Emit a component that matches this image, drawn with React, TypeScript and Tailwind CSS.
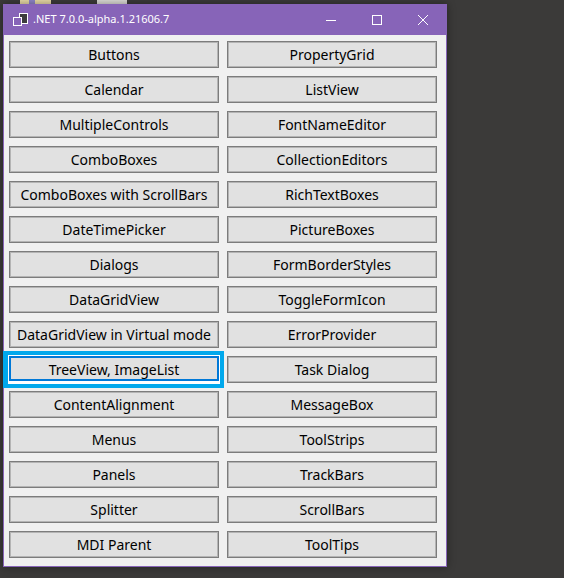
const LEFT = [
  "Buttons",
  "Calendar",
  "MultipleControls",
  "ComboBoxes",
  "ComboBoxes with ScrollBars",
  "DateTimePicker",
  "Dialogs",
  "DataGridView",
  "DataGridView in Virtual mode",
  "TreeView, ImageList",
  "ContentAlignment",
  "Menus",
  "Panels",
  "Splitter",
  "MDI Parent",
];

const RIGHT = [
  "PropertyGrid",
  "ListView",
  "FontNameEditor",
  "CollectionEditors",
  "RichTextBoxes",
  "PictureBoxes",
  "FormBorderStyles",
  "ToggleFormIcon",
  "ErrorProvider",
  "Task Dialog",
  "MessageBox",
  "ToolStrips",
  "TrackBars",
  "ScrollBars",
  "ToolTips",
];

function DemoButton({ label }: { label: string }) {
  if (label === "TreeView, ImageList") {
    return (
      <div className="relative h-[27px] w-[210px]">
        {/* focus ring sits over the window edge */}
        <div className="absolute -top-[5px] -right-[5px] -bottom-[5px] -left-[6px] border-[4px] border-l-[5px] border-[#00a8ec] bg-white" />
        <button
          type="button"
          className="relative block h-[25px] w-full border-2 border-[#0078d7] bg-[#e1e1e1] pt-[2px] text-center text-[14px] leading-[19px] text-black"
        >
          {label}
        </button>
      </div>
    );
  }
  return (
    <button
      type="button"
      className="block h-[27px] w-[210px] border border-[#7c7c7c] bg-[#e1e1e1] text-center text-[14px] leading-[25px] text-black shadow-[inset_0_0_0_1px_#b4b4b4]"
    >
      {label}
    </button>
  );
}

export default function App() {
  const rows = LEFT.map((label, i) => [label, RIGHT[i]]);

  return (
    <div
      className="relative h-[578px] w-[564px] overflow-hidden bg-[#3b3a39] pt-[4px] pl-[3px]"
      style={{ fontFamily: '"Noto Sans", "Open Sans", sans-serif' }}
    >
      {/* desktop icons peeking out above the window */}
      <div className="absolute top-0 left-[20px] h-[4px] w-[31px] bg-[#e8d9a6]" />
      <div className="absolute top-0 left-[29px] h-[4px] w-[6px] bg-[#8f86c8]" />
      <div className="absolute top-0 left-[97px] h-[4px] w-[30px] bg-[#dcdcd6]" />

      <div className="relative h-[563px] w-[444px] border border-t-0 border-[#8764b8] bg-[#f0f0f0] shadow-[0_0_8px_rgba(0,0,0,0.4)]">
        <div className="-mx-px flex h-[31px] items-center bg-[#8764b8] text-white">
          <svg viewBox="0 0 15 14" className="ml-[10px] h-[14px] w-[15px]" aria-hidden>
            <rect x="6.5" y="0.5" width="8" height="10" fill="#3c3c3c" stroke="#fff" />
            <rect x="0.5" y="4.5" width="8" height="8" fill="#8764b8" stroke="#fff" />
          </svg>
          <span className="ml-[5px] text-[11px]">.NET 7.0.0-alpha.1.21606.7</span>
          <div className="mr-px ml-auto flex">
            <div className="flex h-[31px] w-[46px] items-center justify-center">
              <svg viewBox="0 0 10 10" className="h-[10px] w-[10px]" fill="none" stroke="#fff" aria-hidden>
                <path d="M0 5.5h10" />
              </svg>
            </div>
            <div className="flex h-[31px] w-[46px] items-center justify-center">
              <svg viewBox="0 0 10 10" className="h-[10px] w-[10px]" fill="none" stroke="#fff" aria-hidden>
                <rect x="0.5" y="0.5" width="9" height="9" />
              </svg>
            </div>
            <div className="flex h-[31px] w-[46px] items-center justify-center">
              <svg viewBox="0 0 10 10" className="h-[10px] w-[10px]" fill="none" stroke="#fff" aria-hidden>
                <path d="M0 0l10 10M10 0L0 10" />
              </svg>
            </div>
          </div>
        </div>
        <div className="grid grid-cols-[210px_210px] gap-x-[8px] gap-y-[8px] pt-[6px] pl-[5px]">
          {rows.map(([a, b]) => [
            <DemoButton key={a} label={a} />,
            <DemoButton key={b} label={b} />,
          ])}
        </div>
      </div>
    </div>
  );
}
